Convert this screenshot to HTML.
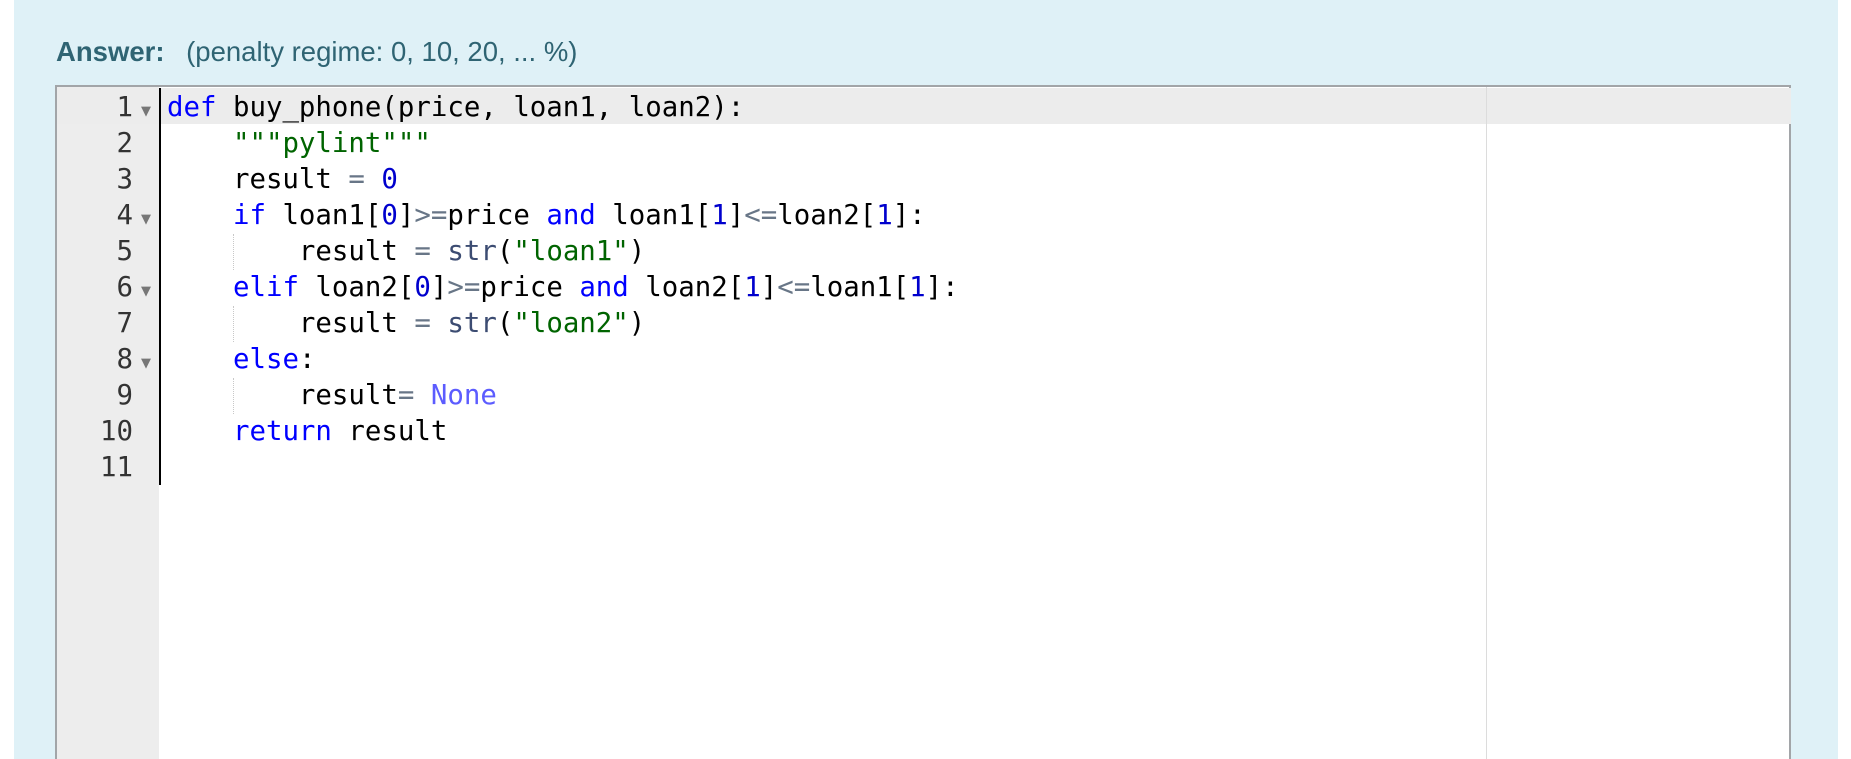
<!DOCTYPE html>
<html><head><meta charset="utf-8"><style>
html,body{margin:0;padding:0;background:#fff;width:1851px;height:759px;overflow:hidden}
.wrap{position:relative;width:1851px;height:759px;overflow:hidden}
.bg{position:absolute;left:14px;top:0;width:1824px;height:759px;background:#dff1f7}
.ans{position:absolute;left:56px;top:36px;font-family:"Liberation Sans",sans-serif;font-size:27.5px;color:#2f6473;white-space:nowrap}
.ans b{font-weight:bold;margin-right:14px}
.ed{position:absolute;left:55px;top:85px;width:1736px;height:700px;background:#fff;border:2px solid #a2a5a8;box-sizing:border-box}
.gut{position:absolute;left:0;top:0;width:102px;height:700px;background:#ededed}
.act{position:absolute;left:0;top:1px;width:1734px;height:36px;background:#ececec}
.cur{position:absolute;left:102px;top:1px;width:2px;height:397px;background:#000}
.pm{position:absolute;left:1429px;top:0;width:1px;height:700px;background:#dcdcdc}
.ln,.code{position:absolute;top:3px;font-family:"DejaVu Sans Mono","Liberation Mono",monospace;font-size:27.4px;line-height:36px;white-space:pre}
.ln{left:0;width:76px;text-align:right;color:#333}
.fa{position:absolute;left:84px;font-size:13px;color:#777;font-family:"DejaVu Sans",sans-serif}
.code{left:110px;color:#000}
.k{color:#0000ff}.s{color:#006400}.n{color:#0000cd}.o{color:#687687}.f{color:#3c4c72}.c{color:#5c5cff}
.ig{position:absolute;width:0;border-left:1px dotted #c8c8c8;height:36px;left:176px}
</style></head><body><div class="wrap">
<div class="bg"></div>
<div class="ans"><b>Answer:</b> (penalty regime: 0, 10, 20, ... %)</div>
<div class="ed">
<div class="gut"></div>
<div class="act"></div>
<div class="pm"></div>
<div class="cur"></div>
<div class="ln">1
2
3
4
5
6
7
8
9
10
11</div>
<div class="fa" style="top:17px">▼</div>
<div class="fa" style="top:125px">▼</div>
<div class="fa" style="top:197px">▼</div>
<div class="fa" style="top:269px">▼</div>
<div class="ig" style="top:147px"></div>
<div class="ig" style="top:219px"></div>
<div class="ig" style="top:291px"></div>
<div class="code"><span class="k">def</span> buy_phone(price, loan1, loan2):
    <span class="s">"""pylint"""</span>
    result <span class="o">=</span> <span class="n">0</span>
    <span class="k">if</span> loan1[<span class="n">0</span>]<span class="o">&gt;=</span>price <span class="k">and</span> loan1[<span class="n">1</span>]<span class="o">&lt;=</span>loan2[<span class="n">1</span>]:
        result <span class="o">=</span> <span class="f">str</span>(<span class="s">"loan1"</span>)
    <span class="k">elif</span> loan2[<span class="n">0</span>]<span class="o">&gt;=</span>price <span class="k">and</span> loan2[<span class="n">1</span>]<span class="o">&lt;=</span>loan1[<span class="n">1</span>]:
        result <span class="o">=</span> <span class="f">str</span>(<span class="s">"loan2"</span>)
    <span class="k">else</span>:
        result<span class="o">=</span> <span class="c">None</span>
    <span class="k">return</span> result
</div>
</div>
</div></body></html>
